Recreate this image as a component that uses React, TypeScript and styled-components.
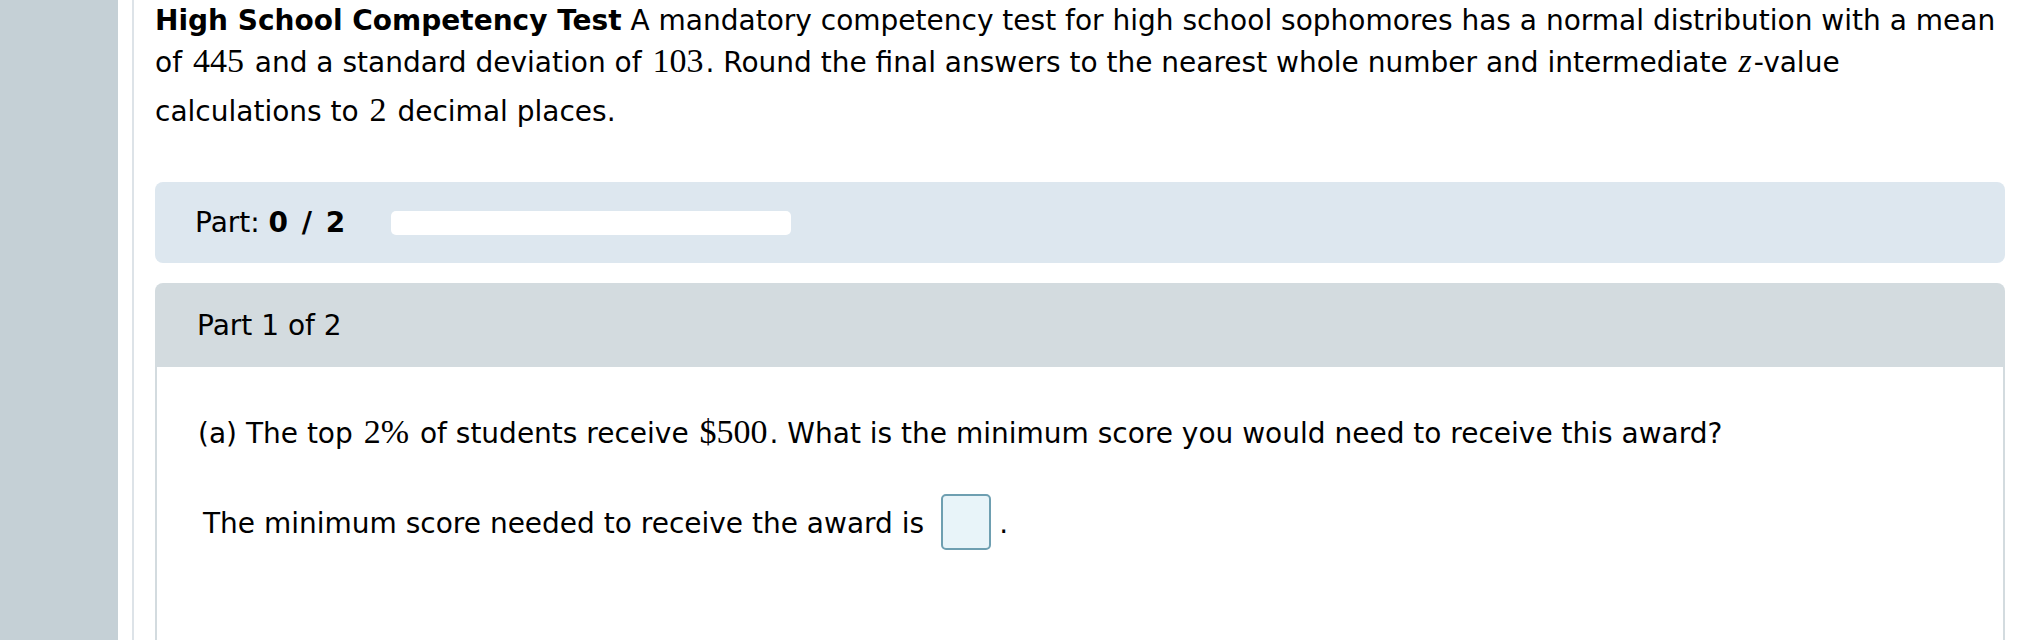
import React from 'react';
import styled, { createGlobalStyle } from 'styled-components';

const GlobalStyle = createGlobalStyle`
  html, body {
    margin: 0;
    padding: 0;
    background: #fff;
  }
  body {
    font-family: 'DejaVu Sans', Verdana, sans-serif;
    font-size: 28px;
    color: #000;
  }
`;

const Page = styled.div`
  display: flex;
  min-height: 640px;
  overflow: hidden;
`;

const Sidebar = styled.div`
  width: 118px;
  flex-shrink: 0;
  background: #c5d0d6;
`;

const Main = styled.div`
  flex: 1;
  margin-left: 14px;
  padding: 0 17px 0 21px;
  border-left: 2px solid #dde3e8;
`;

const Intro = styled.p`
  margin: 0 0 50px;
  padding-top: 1px;
  line-height: 40px;
`;

const Math = styled.span<{ italic?: boolean }>`
  margin: 0 2px;
  font-family: 'Liberation Serif', 'Times New Roman', serif;
  font-size: 34px;
  font-style: ${(props) => (props.italic ? 'italic' : 'normal')};
`;

const DeepMath = styled(Math)`
  display: inline-block;
  padding-bottom: 9px;
`;

const ProgressPanel = styled.div`
  display: flex;
  align-items: center;
  height: 81px;
  padding: 0 40px;
  background: #dde7ef;
  border-radius: 8px;
`;

const PartLabel = styled.div`
  & > b {
    font-weight: 700;
    word-spacing: 4px;
  }
`;

const ProgressTrack = styled.div`
  width: 400px;
  height: 24px;
  margin-left: 46px;
  background: #fff;
  border-radius: 5px;
`;

const PartCard = styled.div`
  margin-top: 20px;
`;

const PartHeader = styled.div`
  display: flex;
  align-items: center;
  height: 84px;
  padding-left: 42px;
  background: #d3dbdf;
  border-radius: 8px 8px 0 0;
`;

const PartBody = styled.div`
  min-height: 300px;
  padding: 45px 0 0 41px;
  border: 2px solid #d3dbdf;
  border-top: none;
`;

const Question = styled.p`
  margin: 0;
  line-height: 40px;
`;

const AnswerRow = styled.div`
  display: flex;
  align-items: center;
  height: 56px;
  margin-top: 41px;
  padding-left: 5px;
`;

const AnswerBox = styled.div`
  width: 46px;
  height: 52px;
  margin: -3px 0 0 17px;
  background: #e8f4f9;
  border: 2px solid #6e9fb1;
  border-radius: 5px;
`;

const Period = styled.span`
  margin-left: 8px;
`;

export default function App() {
  return (
    <>
      <GlobalStyle />
      <Page>
        <Sidebar />
        <Main>
          <Intro>
            <b>High School Competency Test</b> A mandatory competency test for high school sophomores has a
            normal distribution with a mean of <Math>445</Math> and a standard deviation of <Math>103</Math>. Round
            the final answers to the nearest whole number and intermediate <DeepMath italic>z</DeepMath>-value
            calculations to <Math>2</Math> decimal places.
          </Intro>
          <ProgressPanel>
            <PartLabel>
              Part: <b>0 / 2</b>
            </PartLabel>
            <ProgressTrack />
          </ProgressPanel>
          <PartCard>
            <PartHeader>Part 1 of 2</PartHeader>
            <PartBody>
              <Question>
                (a) The top <Math>2%</Math> of students receive <Math>$500</Math>. What is the minimum score you would
                need to receive this award?
              </Question>
              <AnswerRow>
                The minimum score needed to receive the award is
                <AnswerBox />
                <Period>.</Period>
              </AnswerRow>
            </PartBody>
          </PartCard>
        </Main>
      </Page>
    </>
  );
}
